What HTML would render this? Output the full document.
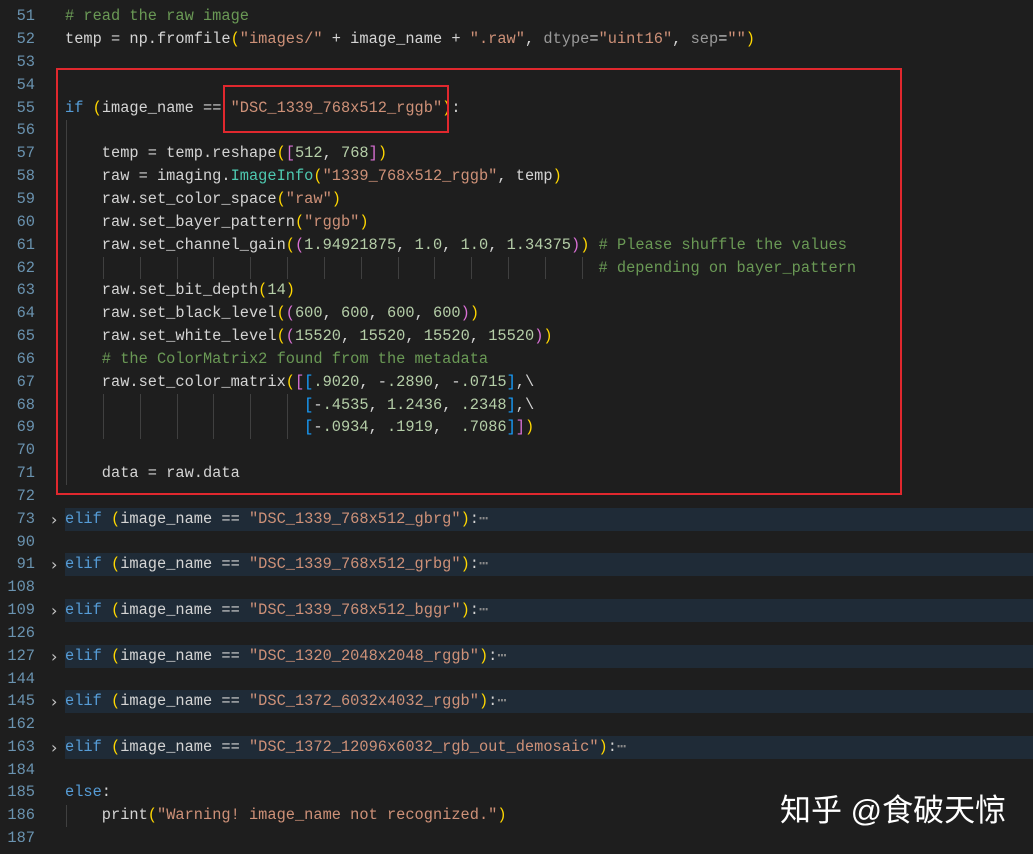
<!DOCTYPE html>
<html><head><meta charset="utf-8"><style>
html,body{margin:0;padding:0;background:#1e1e1e;}
body{width:1033px;height:854px;position:relative;overflow:hidden;font-family:"Liberation Mono",monospace;font-size:15.33px;color:#d4d4d4;}
.l{position:absolute;left:0;width:1033px;height:23px;line-height:23px;white-space:pre;}
.n{position:absolute;left:0;width:35px;text-align:right;color:#6a93b0;}
.c{position:absolute;left:65px;}
.f{background:#1f2b37;}
.ar{position:absolute;left:51px;color:#c5c5c5;font-family:"DejaVu Sans",sans-serif;font-size:16px;}
.k{color:#569cd6}.s{color:#ce9178}.cm{color:#6a9955}.nu{color:#b5cea8}.t{color:#4ec9b0}
.y{color:#ffd700}.p{color:#da70d6}.b{color:#179fff}.g{color:#9a9a9a}.d{color:#8a8a8a}
.box{position:absolute;border:2px solid #e0282e;}
.gd{position:absolute;width:1px;background:#404040;}
.wm{position:absolute;left:780px;top:785px;font-family:"Liberation Sans","Noto Sans CJK SC",sans-serif;font-size:31px;color:#fff;}
</style></head><body>
<div class="l" style="top:5px"><span class="n">51</span><span class="c cm"># read the raw image</span></div>
<div class="l" style="top:28px"><span class="n">52</span><span class="c">temp = np.fromfile<span class="y">(</span><span class="s">"images/"</span> + image_name + <span class="s">".raw"</span>, <span class="g">dtype</span>=<span class="s">"uint16"</span>, <span class="g">sep</span>=<span class="s">""</span><span class="y">)</span></span></div>
<div class="l" style="top:51px"><span class="n">53</span></div>
<div class="l" style="top:74px"><span class="n">54</span></div>
<div class="l" style="top:97px"><span class="n">55</span><span class="c"><span class="k">if</span> <span class="y">(</span>image_name == <span class="s">"DSC_1339_768x512_rggb"</span><span class="y">)</span>:</span></div>
<div class="l" style="top:119px"><span class="n">56</span></div>
<div class="l" style="top:142px"><span class="n">57</span><span class="c">    temp = temp.reshape<span class="y">(</span><span class="p">[</span><span class="nu">512</span>, <span class="nu">768</span><span class="p">]</span><span class="y">)</span></span></div>
<div class="l" style="top:165px"><span class="n">58</span><span class="c">    raw = imaging.<span class="t">ImageInfo</span><span class="y">(</span><span class="s">"1339_768x512_rggb"</span>, temp<span class="y">)</span></span></div>
<div class="l" style="top:188px"><span class="n">59</span><span class="c">    raw.set_color_space<span class="y">(</span><span class="s">"raw"</span><span class="y">)</span></span></div>
<div class="l" style="top:211px"><span class="n">60</span><span class="c">    raw.set_bayer_pattern<span class="y">(</span><span class="s">"rggb"</span><span class="y">)</span></span></div>
<div class="l" style="top:234px"><span class="n">61</span><span class="c">    raw.set_channel_gain<span class="y">(</span><span class="p">(</span><span class="nu">1.94921875</span>, <span class="nu">1.0</span>, <span class="nu">1.0</span>, <span class="nu">1.34375</span><span class="p">)</span><span class="y">)</span> <span class="cm"># Please shuffle the values</span></span></div>
<div class="l" style="top:257px"><span class="n">62</span><span class="c">                                                          <span class="cm"># depending on bayer_pattern</span></span></div>
<div class="l" style="top:279px"><span class="n">63</span><span class="c">    raw.set_bit_depth<span class="y">(</span><span class="nu">14</span><span class="y">)</span></span></div>
<div class="l" style="top:302px"><span class="n">64</span><span class="c">    raw.set_black_level<span class="y">(</span><span class="p">(</span><span class="nu">600</span>, <span class="nu">600</span>, <span class="nu">600</span>, <span class="nu">600</span><span class="p">)</span><span class="y">)</span></span></div>
<div class="l" style="top:325px"><span class="n">65</span><span class="c">    raw.set_white_level<span class="y">(</span><span class="p">(</span><span class="nu">15520</span>, <span class="nu">15520</span>, <span class="nu">15520</span>, <span class="nu">15520</span><span class="p">)</span><span class="y">)</span></span></div>
<div class="l" style="top:348px"><span class="n">66</span><span class="c">    <span class="cm"># the ColorMatrix2 found from the metadata</span></span></div>
<div class="l" style="top:371px"><span class="n">67</span><span class="c">    raw.set_color_matrix<span class="y">(</span><span class="p">[</span><span class="b">[</span><span class="nu">.9020</span>, -<span class="nu">.2890</span>, -<span class="nu">.0715</span><span class="b">]</span>,\</span></div>
<div class="l" style="top:394px"><span class="n">68</span><span class="c">                          <span class="b">[</span>-<span class="nu">.4535</span>, <span class="nu">1.2436</span>, <span class="nu">.2348</span><span class="b">]</span>,\</span></div>
<div class="l" style="top:416px"><span class="n">69</span><span class="c">                          <span class="b">[</span>-<span class="nu">.0934</span>, <span class="nu">.1919</span>,  <span class="nu">.7086</span><span class="b">]</span><span class="p">]</span><span class="y">)</span></span></div>
<div class="l" style="top:439px"><span class="n">70</span></div>
<div class="l" style="top:462px"><span class="n">71</span><span class="c">    data = raw.data</span></div>
<div class="l" style="top:485px"><span class="n">72</span></div>
<div class="l f" style="top:508px;left:65px;width:968px"></div>
<div class="l" style="top:508px"><span class="n">73</span><span class="ar">›</span><span class="c"><span class="k">elif</span> <span class="y">(</span>image_name == <span class="s">"DSC_1339_768x512_gbrg"</span><span class="y">)</span>:<span class="d">⋯</span></span></div>
<div class="l" style="top:531px"><span class="n">90</span></div>
<div class="l f" style="top:553px;left:65px;width:968px"></div>
<div class="l" style="top:553px"><span class="n">91</span><span class="ar">›</span><span class="c"><span class="k">elif</span> <span class="y">(</span>image_name == <span class="s">"DSC_1339_768x512_grbg"</span><span class="y">)</span>:<span class="d">⋯</span></span></div>
<div class="l" style="top:576px"><span class="n">108</span></div>
<div class="l f" style="top:599px;left:65px;width:968px"></div>
<div class="l" style="top:599px"><span class="n">109</span><span class="ar">›</span><span class="c"><span class="k">elif</span> <span class="y">(</span>image_name == <span class="s">"DSC_1339_768x512_bggr"</span><span class="y">)</span>:<span class="d">⋯</span></span></div>
<div class="l" style="top:622px"><span class="n">126</span></div>
<div class="l f" style="top:645px;left:65px;width:968px"></div>
<div class="l" style="top:645px"><span class="n">127</span><span class="ar">›</span><span class="c"><span class="k">elif</span> <span class="y">(</span>image_name == <span class="s">"DSC_1320_2048x2048_rggb"</span><span class="y">)</span>:<span class="d">⋯</span></span></div>
<div class="l" style="top:668px"><span class="n">144</span></div>
<div class="l f" style="top:690px;left:65px;width:968px"></div>
<div class="l" style="top:690px"><span class="n">145</span><span class="ar">›</span><span class="c"><span class="k">elif</span> <span class="y">(</span>image_name == <span class="s">"DSC_1372_6032x4032_rggb"</span><span class="y">)</span>:<span class="d">⋯</span></span></div>
<div class="l" style="top:713px"><span class="n">162</span></div>
<div class="l f" style="top:736px;left:65px;width:968px"></div>
<div class="l" style="top:736px"><span class="n">163</span><span class="ar">›</span><span class="c"><span class="k">elif</span> <span class="y">(</span>image_name == <span class="s">"DSC_1372_12096x6032_rgb_out_demosaic"</span><span class="y">)</span>:<span class="d">⋯</span></span></div>
<div class="l" style="top:759px"><span class="n">184</span></div>
<div class="l" style="top:781px"><span class="n">185</span><span class="c"><span class="k">else</span>:</span></div>
<div class="l" style="top:804px"><span class="n">186</span><span class="c">    print<span class="y">(</span><span class="s">"Warning! image_name not recognized."</span><span class="y">)</span></span></div>
<div class="l" style="top:827px"><span class="n">187</span></div>

<div class="gd" style="left:66px;top:120px;height:365px"></div>
<div class="gd" style="left:66px;top:805px;height:22px"></div>
<div class="gd" style="left:103px;top:257px;height:22px"></div>
<div class="gd" style="left:140px;top:257px;height:22px"></div>
<div class="gd" style="left:177px;top:257px;height:22px"></div>
<div class="gd" style="left:213px;top:257px;height:22px"></div>
<div class="gd" style="left:250px;top:257px;height:22px"></div>
<div class="gd" style="left:287px;top:257px;height:22px"></div>
<div class="gd" style="left:324px;top:257px;height:22px"></div>
<div class="gd" style="left:361px;top:257px;height:22px"></div>
<div class="gd" style="left:398px;top:257px;height:22px"></div>
<div class="gd" style="left:434px;top:257px;height:22px"></div>
<div class="gd" style="left:471px;top:257px;height:22px"></div>
<div class="gd" style="left:508px;top:257px;height:22px"></div>
<div class="gd" style="left:545px;top:257px;height:22px"></div>
<div class="gd" style="left:582px;top:257px;height:22px"></div>
<div class="gd" style="left:103px;top:394px;height:45px"></div>
<div class="gd" style="left:140px;top:394px;height:45px"></div>
<div class="gd" style="left:177px;top:394px;height:45px"></div>
<div class="gd" style="left:213px;top:394px;height:45px"></div>
<div class="gd" style="left:250px;top:394px;height:45px"></div>
<div class="gd" style="left:287px;top:394px;height:45px"></div>

<div class="box" style="left:56px;top:68px;width:842px;height:423px"></div>
<div class="box" style="left:223px;top:85px;width:222px;height:44px"></div>
<div class="wm">知乎 @食破天惊</div>
</body></html>
